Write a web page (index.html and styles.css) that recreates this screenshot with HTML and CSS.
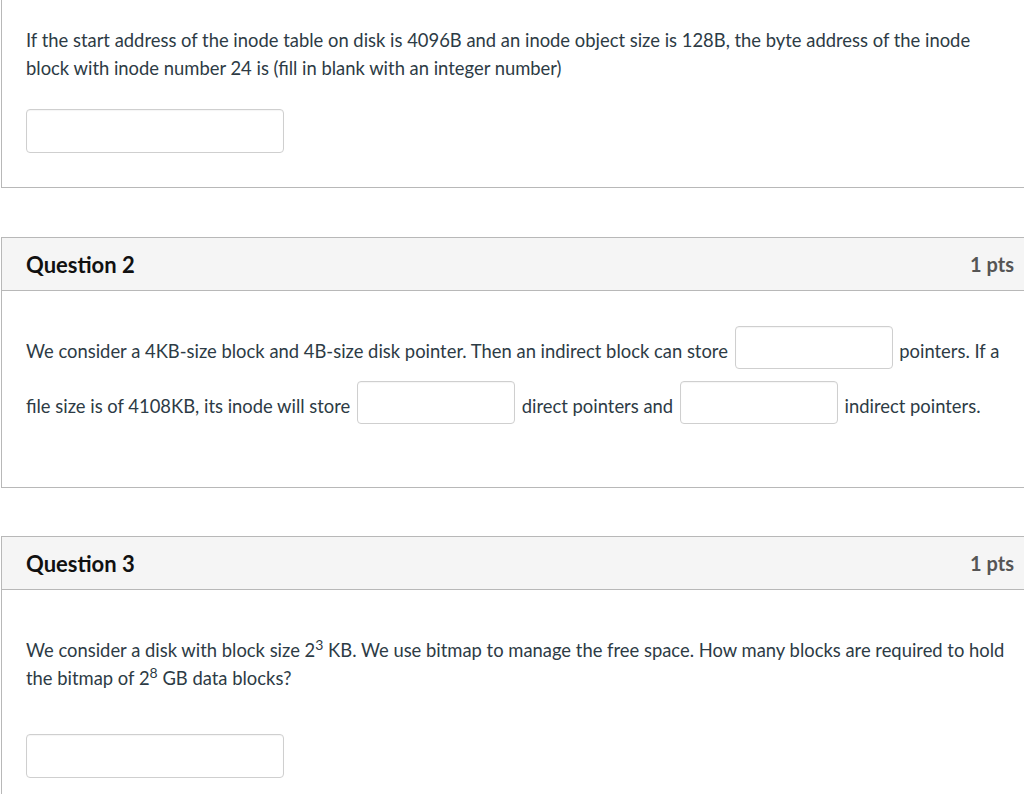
FILE: index.html
```html
<!DOCTYPE html>
<html lang="en">
<head>
    <meta charset="UTF-8">
    <title>Quiz</title>
    <link rel="stylesheet" href="styles.css">
</head>
<body>
    <div class="question question-first">
        <div class="question-body">
            <p class="question-text">If the start address of the inode table on disk is 4096B and an inode object size is 128B, the byte address of the inode block with inode number 24 is (ﬁll in blank with an integer number)</p>
            <input type="text" class="answer-box">
        </div>
    </div>

    <div class="question">
        <div class="question-header">
            <h3 class="question-title">Question 2</h3>
            <span class="question-points">1 pts</span>
        </div>
        <div class="question-body blanks-body">
            <p class="blanks-text">We consider a 4KB-size block and 4B-size disk pointer. Then an indirect block can store <input type="text" class="blank"> pointers. If a ﬁle size is of 4108KB, its inode will store <input type="text" class="blank"> direct pointers and <input type="text" class="blank"> indirect pointers.</p>
        </div>
    </div>

    <div class="question">
        <div class="question-header">
            <h3 class="question-title">Question 3</h3>
            <span class="question-points">1 pts</span>
        </div>
        <div class="question-body third-body">
            <p class="question-text">We consider a disk with block size 2<sup>3</sup> KB. We use bitmap to manage the free space. How many blocks are required to hold the bitmap of 2<sup>8</sup> GB data blocks?</p>
            <input type="text" class="answer-box">
        </div>
    </div>
</body>
</html>
```

FILE: styles.css
```css
body {
    margin: 0;
    padding: 0 0 0 1px;
    background: #fff;
    color: #2d3b45;
    font-family: Lato, "Liberation Sans", sans-serif;
    font-size: 18.4px;
    overflow: hidden;
}

.question {
    border: 1px solid #b8b8b8;
    border-right: none;
    margin-bottom: 48px;
}

.question-first {
    border-top: none;
    margin-bottom: 49px;
}

.question-header {
    display: flex;
    justify-content: space-between;
    align-items: center;
    height: 52px;
    padding: 0 10px 0 24px;
    background: #f5f5f5;
    border-bottom: 1px solid #b8b8b8;
}

.question-title {
    margin: 0;
    font-size: 22px;
    font-weight: bold;
    color: #111;
}

.question-points {
    font-size: 20px;
    font-weight: bold;
    color: #555;
}

.question-body {
    padding: 26px 10px 34px 24px;
}

.question-text {
    margin: 0 0 27px;
    line-height: 28px;
}

.question-text sup {
    font-size: 14px;
    line-height: 0;
}

.answer-box {
    display: block;
    box-sizing: border-box;
    width: 258px;
    height: 44px;
    margin: 0;
    border: 1px solid #cfcfcf;
    border-radius: 4px;
    background: #fff;
    box-shadow: inset 0 1px 1px rgba(0, 0, 0, 0.04);
}

.blanks-body {
    padding-top: 33px;
    padding-bottom: 53px;
}

.blanks-text {
    margin: 0;
    line-height: 55px;
}

.blank {
    box-sizing: border-box;
    width: 158px;
    height: 43px;
    margin: 0 2px;
    vertical-align: 4px;
    font: inherit;
    line-height: normal;
    border: 1px solid #cfcfcf;
    border-radius: 4px;
    background: #fff;
    box-shadow: inset 0 1px 1px rgba(0, 0, 0, 0.04);
}

.third-body {
    padding-top: 46px;
}

.third-body .question-text {
    margin-bottom: 42px;
}
```
